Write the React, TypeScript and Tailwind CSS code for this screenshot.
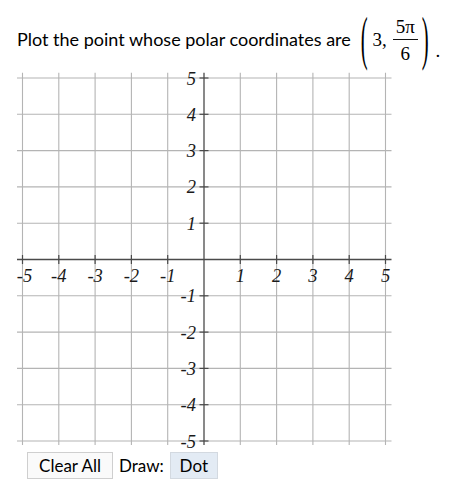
import React from "react";

const U = 36.3;
const OX = 204;
const OY = 191.5; // svg coords (page y - 68)

function Graph() {
  const ks = [-5, -4, -3, -2, -1, 0, 1, 2, 3, 4, 5];
  const x0 = 17, x1 = 391.5, y0 = 4.7, y1 = 377;
  return (
    <svg width={474} height={382} className="block font-['Liberation_Serif',serif]">
      {ks.map((k) =>
        k === 0 ? null : (
          <line key={"v" + k} x1={OX + k * U} x2={OX + k * U} y1={y0} y2={y1} stroke="#b4b4b4" strokeWidth={1.1} />
        )
      )}
      {ks.map((k) =>
        k === 0 ? null : (
          <line key={"h" + k} x1={x0} x2={x1} y1={OY - k * U} y2={OY - k * U} stroke="#b4b4b4" strokeWidth={1.1} />
        )
      )}
      <line x1={x0} x2={x1} y1={OY} y2={OY} stroke="#4a4a4a" strokeWidth={1.3} />
      <line x1={OX} x2={OX} y1={y0} y2={y1} stroke="#4a4a4a" strokeWidth={1.3} />
      {ks.map((k) =>
        k === 0 ? null : (
          <g key={"t" + k}>
            <line x1={OX + k * U} x2={OX + k * U} y1={OY - 4.5} y2={OY + 4.5} stroke="#4a4a4a" strokeWidth={1.2} />
            <line x1={OX - 4.5} x2={OX + 4.5} y1={OY - k * U} y2={OY - k * U} stroke="#4a4a4a" strokeWidth={1.2} />
            <text
              x={OX + k * U + (k === -5 ? 2 : 0)}
              y={OY + 22}
              textAnchor="middle"
              fontStyle="italic"
              fontSize={18.5}
              fontFamily="Liberation Serif, serif"
              fill="#1a1a1a"
            >
              {k < 0 ? "-" + -k : String(k)}
            </text>
            <text
              x={OX - 8}
              y={OY - k * U + 6.5}
              textAnchor="end"
              fontStyle="italic"
              fontSize={18.5}
              fontFamily="Liberation Serif, serif"
              fill="#1a1a1a"
            >
              {k < 0 ? "-" + -k : String(k)}
            </text>
          </g>
        )
      )}
    </svg>
  );
}

export default function App() {
  return (
    <div className="w-[474px] h-[490px] bg-white text-[#000] font-['Lato','Liberation_Sans',sans-serif]">
      <div className="flex items-center h-[68px] pl-[17px]">
        <span className="text-[18px] leading-none mt-[9px]">Plot the point whose polar coordinates are</span>
        <span className="ml-[9px] mt-[12px] inline-flex items-center text-[19px] leading-none font-['Liberation_Serif',serif]">
          <span className="inline-block text-[26px] scale-y-[2.3] scale-x-[0.8] leading-none">(</span>
          <span className="ml-[4px]">3,</span>
          <span className="inline-flex flex-col items-center ml-[6px]">
            <span className="leading-none pb-[3px]">5π</span>
            <span className="block h-[1.3px] w-[25px] bg-[#111]" />
            <span className="leading-none pt-[4px]">6</span>
          </span>
          <span className="inline-block text-[26px] scale-y-[2.3] scale-x-[0.8] leading-none ml-[3px]">)</span>
          <span className="ml-[6px] self-end mb-[3px]">.</span>
        </span>
      </div>
      <Graph />
      <div className="flex items-center mt-[2px] pl-[27px] text-[17px]">
        <button className="h-[27px] w-[86px] border border-[#cfcfcf] bg-[#fafafa] leading-none">Clear All</button>
        <span className="ml-[6px]">Draw:</span>
        <button className="ml-[6px] h-[27px] w-[48px] border border-[#d3d9e0] bg-[#e3ebf4] leading-none">Dot</button>
      </div>
    </div>
  );
}
